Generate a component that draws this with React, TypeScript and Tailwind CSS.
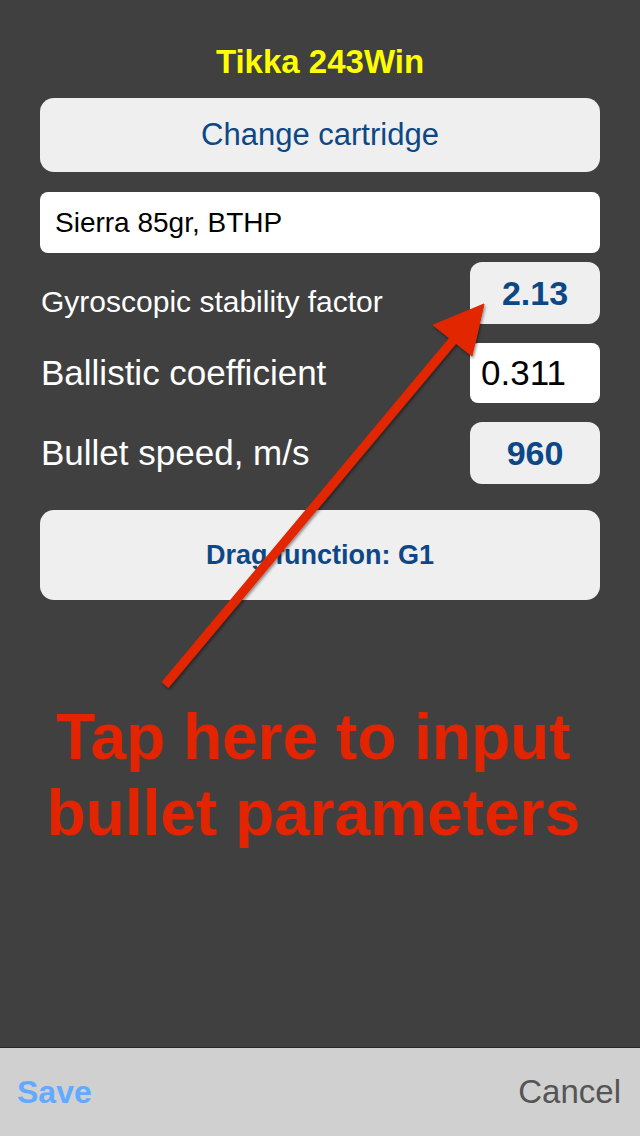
import React from 'react';

// 弾丸パラメータの行
type Row = {
  label: string;
  value: string;
  labelSize: string;
  editable: boolean;
  boxClass: string;
  labelOffset?: string;
};

const rows: Row[] = [
  {
    label: 'Gyroscopic stability factor',
    value: '2.13',
    labelSize: 'text-[30px]',
    editable: false,
    boxClass: 'mt-[9px] h-[62px]',
    labelOffset: 'mt-[16px]',
  },
  {
    label: 'Ballistic coefficient',
    value: '0.311',
    labelSize: 'text-[35px]',
    editable: true,
    boxClass: 'mt-[19px] h-[60px]',
  },
  {
    label: 'Bullet speed, m/s',
    value: '960',
    labelSize: 'text-[35px]',
    editable: false,
    boxClass: 'mt-[19px] h-[62px]',
  },
];

function Arrow() {
  return (
    <svg className="absolute left-0 top-0 pointer-events-none" width="640" height="1136" viewBox="0 0 640 1136">
      <defs>
        <filter id="shadow" x="-10%" y="-10%" width="120%" height="120%">
          <feDropShadow dx="1" dy="2" stdDeviation="1.5" floodColor="#000" floodOpacity="0.45" />
        </filter>
      </defs>
      <g filter="url(#shadow)" fill="#e22500" stroke="#e22500">
        <line x1="165" y1="685" x2="455" y2="338" strokeWidth="9" />
        <polygon points="484,304 433,325 472,356" strokeWidth="1" />
      </g>
    </svg>
  );
}

export default function App() {
  return (
    <div
      className="relative w-[640px] h-[1136px] bg-[#404040] flex flex-col overflow-hidden"
      style={{ fontFamily: '"Liberation Sans", Arial, sans-serif' }}
    >
      <div className="flex-1 flex flex-col px-[40px]">
        {/* タイトル */}
        <div className="mt-[44px] h-[36px] leading-[36px] text-center text-[33px] font-bold text-[#ffff00]">
          Tikka 243Win
        </div>

        <button className="mt-[18px] h-[74px] w-full rounded-[14px] bg-[#efefef] text-[31px] text-[#0c4886]">
          Change cartridge
        </button>

        <div className="mt-[20px] h-[61px] w-full rounded-[8px] bg-white flex items-center pl-[15px] text-[28px] text-black">
          Sierra 85gr, BTHP
        </div>

        {rows.map((row) => (
          <div key={row.label} className={`flex items-center justify-between ${row.boxClass}`}>
            <span className={`text-white pl-px ${row.labelSize} ${row.labelOffset ?? ''}`}>{row.label}</span>
            {row.editable ? (
              <div className="h-full w-[130px] rounded-[8px] bg-white flex items-center pl-[11px] text-[35px] text-black">
                {row.value}
              </div>
            ) : (
              <div className="h-full w-[130px] rounded-[12px] bg-[#efefef] flex items-center justify-center text-[34px] font-bold text-[#0c4886]">
                {row.value}
              </div>
            )}
          </div>
        ))}

        <button className="mt-[26px] h-[90px] w-full rounded-[14px] bg-[#efefef] text-[27px] font-bold text-[#0c4886]">
          Drag function: G1
        </button>

        {/* 説明テキスト */}
        <div className="mt-[99px] pr-[13px] text-center text-[64px] leading-[76px] font-bold text-[#e22500] whitespace-nowrap">
          Tap here to input
          <br />
          bullet parameters
        </div>
      </div>

      {/* 下部ツールバー */}
      <div className="h-[89px] border-t border-[#262626] bg-[#d0d0d0] flex items-center justify-between pl-[17px] pr-[19px]">
        <span className="text-[32px] font-bold text-[#62aaff]">Save</span>
        <span className="text-[33px] text-[#555555]">Cancel</span>
      </div>

      <Arrow />
    </div>
  );
}
